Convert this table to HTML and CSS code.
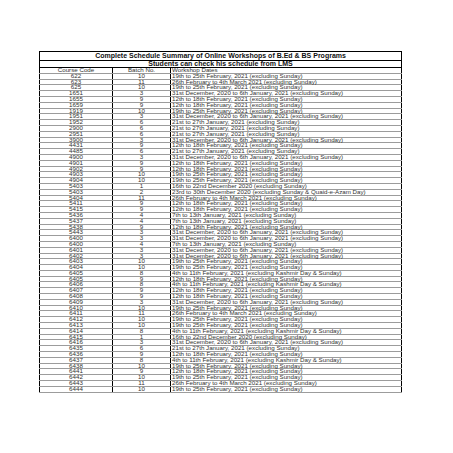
FILE: index.html
```html
<!DOCTYPE html>
<html>
<head>
<meta charset="utf-8">
<link rel="stylesheet" href="styles.css">
</head>
<body>
<div class="page">
<table class="sheet">
<colgroup><col class="c1"><col class="c2"><col class="c3"></colgroup>
<thead>
<tr class="title"><th colspan="3">Complete Schedule Summary of Online Workshops of B.Ed &amp; BS Programs</th></tr>
<tr class="subtitle"><th colspan="3">Students can check his schedule from LMS</th></tr>
<tr class="head"><td class="code">Course Code</td><td class="batch">Batch No.</td><td class="date">Workshop Dates</td></tr>
</thead>
<tbody>
<tr><td class="code">622</td><td class="batch">10</td><td class="date">19th to 25th February, 2021 (excluding Sunday)</td></tr>
<tr><td class="code">623</td><td class="batch">11</td><td class="date">26th February to 4th March 2021 (excluding Sunday)</td></tr>
<tr><td class="code">625</td><td class="batch">10</td><td class="date">19th to 25th February, 2021 (excluding Sunday)</td></tr>
<tr><td class="code">1651</td><td class="batch">3</td><td class="date">31st December, 2020 to 6th January, 2021 (excluding Sunday)</td></tr>
<tr><td class="code">1655</td><td class="batch">9</td><td class="date">12th to 18th February, 2021 (excluding Sunday)</td></tr>
<tr><td class="code">1659</td><td class="batch">9</td><td class="date">12th to 18th February, 2021 (excluding Sunday)</td></tr>
<tr><td class="code">1919</td><td class="batch">10</td><td class="date">19th to 25th February, 2021 (excluding Sunday)</td></tr>
<tr><td class="code">1951</td><td class="batch">3</td><td class="date">31st December, 2020 to 6th January, 2021 (excluding Sunday)</td></tr>
<tr><td class="code">1952</td><td class="batch">6</td><td class="date">21st to 27th January, 2021 (excluding Sunday)</td></tr>
<tr><td class="code">2900</td><td class="batch">6</td><td class="date">21st to 27th January, 2021 (excluding Sunday)</td></tr>
<tr><td class="code">2951</td><td class="batch">6</td><td class="date">21st to 27th January, 2021 (excluding Sunday)</td></tr>
<tr><td class="code">3900</td><td class="batch">3</td><td class="date">31st December, 2020 to 6th January, 2021 (excluding Sunday)</td></tr>
<tr><td class="code">4431</td><td class="batch">9</td><td class="date">12th to 18th February, 2021 (excluding Sunday)</td></tr>
<tr><td class="code">4485</td><td class="batch">6</td><td class="date">21st to 27th January, 2021 (excluding Sunday)</td></tr>
<tr><td class="code">4900</td><td class="batch">3</td><td class="date">31st December, 2020 to 6th January, 2021 (excluding Sunday)</td></tr>
<tr><td class="code">4901</td><td class="batch">9</td><td class="date">12th to 18th February, 2021 (excluding Sunday)</td></tr>
<tr><td class="code">4902</td><td class="batch">9</td><td class="date">12th to 18th February, 2021 (excluding Sunday)</td></tr>
<tr><td class="code">4903</td><td class="batch">10</td><td class="date">19th to 25th February, 2021 (excluding Sunday)</td></tr>
<tr><td class="code">4904</td><td class="batch">10</td><td class="date">19th to 25th February, 2021 (excluding Sunday)</td></tr>
<tr><td class="code">5403</td><td class="batch">1</td><td class="date">16th to 22nd December 2020 (excluding Sunday)</td></tr>
<tr><td class="code">5403</td><td class="batch">2</td><td class="date">23rd to 30th December 2020 (excluding Sunday &amp; Quaid-e-Azam Day)</td></tr>
<tr><td class="code">5404</td><td class="batch">11</td><td class="date">26th February to 4th March 2021 (excluding Sunday)</td></tr>
<tr><td class="code">5411</td><td class="batch">9</td><td class="date">12th to 18th February, 2021 (excluding Sunday)</td></tr>
<tr><td class="code">5415</td><td class="batch">9</td><td class="date">12th to 18th February, 2021 (excluding Sunday)</td></tr>
<tr><td class="code">5436</td><td class="batch">4</td><td class="date">7th to 13th January, 2021 (excluding Sunday)</td></tr>
<tr><td class="code">5437</td><td class="batch">4</td><td class="date">7th to 13th January, 2021 (excluding Sunday)</td></tr>
<tr><td class="code">5438</td><td class="batch">9</td><td class="date">12th to 18th February, 2021 (excluding Sunday)</td></tr>
<tr><td class="code">5443</td><td class="batch">3</td><td class="date">31st December, 2020 to 6th January, 2021 (excluding Sunday)</td></tr>
<tr><td class="code">6400</td><td class="batch">3</td><td class="date">31st December, 2020 to 6th January, 2021 (excluding Sunday)</td></tr>
<tr><td class="code">6400</td><td class="batch">4</td><td class="date">7th to 13th January, 2021 (excluding Sunday)</td></tr>
<tr><td class="code">6401</td><td class="batch">3</td><td class="date">31st December, 2020 to 6th January, 2021 (excluding Sunday)</td></tr>
<tr><td class="code">6402</td><td class="batch">3</td><td class="date">31st December, 2020 to 6th January, 2021 (excluding Sunday)</td></tr>
<tr><td class="code">6403</td><td class="batch">10</td><td class="date">19th to 25th February, 2021 (excluding Sunday)</td></tr>
<tr><td class="code">6404</td><td class="batch">10</td><td class="date">19th to 25th February, 2021 (excluding Sunday)</td></tr>
<tr><td class="code">6405</td><td class="batch">8</td><td class="date">4th to 11th February, 2021 (excluding Kashmir Day &amp; Sunday)</td></tr>
<tr><td class="code">6405</td><td class="batch">9</td><td class="date">12th to 18th February, 2021 (excluding Sunday)</td></tr>
<tr><td class="code">6406</td><td class="batch">8</td><td class="date">4th to 11th February, 2021 (excluding Kashmir Day &amp; Sunday)</td></tr>
<tr><td class="code">6407</td><td class="batch">9</td><td class="date">12th to 18th February, 2021 (excluding Sunday)</td></tr>
<tr><td class="code">6408</td><td class="batch">9</td><td class="date">12th to 18th February, 2021 (excluding Sunday)</td></tr>
<tr><td class="code">6409</td><td class="batch">3</td><td class="date">31st December, 2020 to 6th January, 2021 (excluding Sunday)</td></tr>
<tr><td class="code">6410</td><td class="batch">10</td><td class="date">19th to 25th February, 2021 (excluding Sunday)</td></tr>
<tr><td class="code">6411</td><td class="batch">11</td><td class="date">26th February to 4th March 2021 (excluding Sunday)</td></tr>
<tr><td class="code">6412</td><td class="batch">10</td><td class="date">19th to 25th February, 2021 (excluding Sunday)</td></tr>
<tr><td class="code">6413</td><td class="batch">10</td><td class="date">19th to 25th February, 2021 (excluding Sunday)</td></tr>
<tr><td class="code">6414</td><td class="batch">8</td><td class="date">4th to 11th February, 2021 (excluding Kashmir Day &amp; Sunday)</td></tr>
<tr><td class="code">6415</td><td class="batch">1</td><td class="date">16th to 22nd December 2020 (excluding Sunday)</td></tr>
<tr><td class="code">6416</td><td class="batch">3</td><td class="date">31st December, 2020 to 6th January, 2021 (excluding Sunday)</td></tr>
<tr><td class="code">6435</td><td class="batch">6</td><td class="date">21st to 27th January, 2021 (excluding Sunday)</td></tr>
<tr><td class="code">6436</td><td class="batch">9</td><td class="date">12th to 18th February, 2021 (excluding Sunday)</td></tr>
<tr><td class="code">6437</td><td class="batch">8</td><td class="date">4th to 11th February, 2021 (excluding Kashmir Day &amp; Sunday)</td></tr>
<tr><td class="code">6438</td><td class="batch">10</td><td class="date">19th to 25th February, 2021 (excluding Sunday)</td></tr>
<tr><td class="code">6441</td><td class="batch">9</td><td class="date">12th to 18th February, 2021 (excluding Sunday)</td></tr>
<tr><td class="code">6442</td><td class="batch">10</td><td class="date">19th to 25th February, 2021 (excluding Sunday)</td></tr>
<tr><td class="code">6443</td><td class="batch">11</td><td class="date">26th February to 4th March 2021 (excluding Sunday)</td></tr>
<tr><td class="code">6444</td><td class="batch">10</td><td class="date">19th to 25th February, 2021 (excluding Sunday)</td></tr>
</tbody>
</table>
</div>
</body>
</html>
```

FILE: styles.css
```css
html, body {
  margin: 0;
  padding: 0;
  background: #ffffff;
}
.page {
  padding: 51px 0 0 39px;
}
.sheet {
  border-collapse: collapse;
  table-layout: fixed;
  width: 362px;
  font-family: "Liberation Sans", Arial, sans-serif;
  color: #333;
  border: 1px solid #000;
}
.c1 { width: 73px; }
.c2 { width: 58px; }
.c3 { width: 231px; }
.sheet th {
  font-weight: bold;
  font-size: 7px;
  padding: 0;
  border: 1px solid #000;
  text-align: center;
  white-space: nowrap;
  overflow: hidden;
  color: #111;
}
.title th { height: 8px; line-height: 8px; }
.subtitle th { height: 6px; line-height: 6px; font-size: 7px; }
.sheet td {
  font-size: 6.2px;
  height: 4.8px;
  line-height: 4.1px;
  padding: 0;
  vertical-align: top;
  border-top: 1px solid #9c9c9c;
  border-bottom: 1px solid #9c9c9c;
  white-space: nowrap;
  overflow: visible;
}
.sheet td.code { text-align: center; border-right: 1px solid #000; }
.sheet td.batch { text-align: center; border-right: 1px solid #000; }
.sheet td.date { text-align: left; padding-left: 1px; }
```
